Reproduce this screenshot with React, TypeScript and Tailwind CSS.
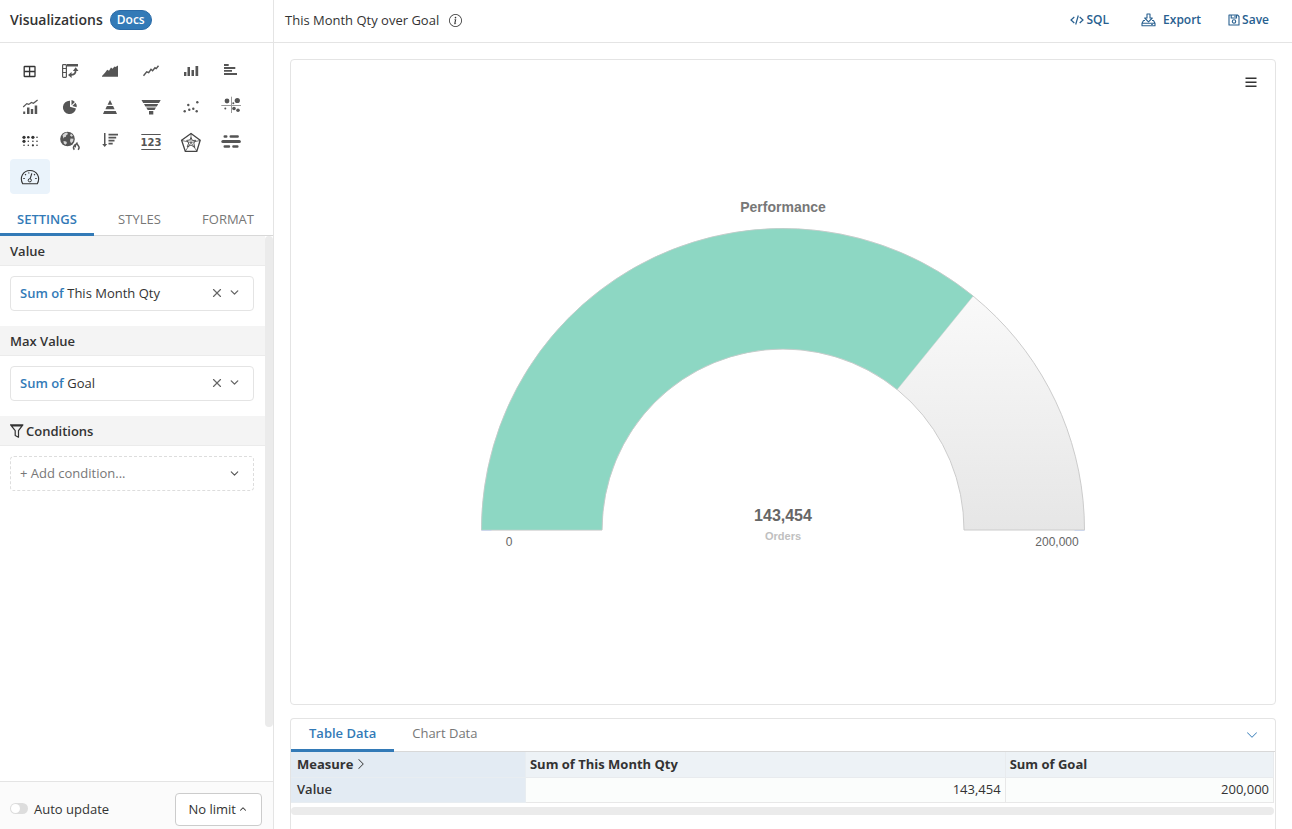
import { useState, type ReactNode } from 'react';
import { BsChevronDown, BsChevronRight, BsInfoCircle } from 'react-icons/bs';
import { ChevronDown, ChevronUp, X } from 'lucide-react';

/* Chart type glyphs, all drawn on a 40x35 grid cell */
const chartTypes: { name: string; glyph: ReactNode }[] = [
  {
    name: 'Table',
    glyph: (
      <g fill="none" stroke="#333" strokeWidth="1.3">
        <rect x="14.2" y="12.5" width="10.8" height="10" rx="0.6" />
        <path d="M19.6 12.5v10M14.2 17.5H25" />
      </g>
    ),
  },
  {
    name: 'Pivot table',
    glyph: (
      <>
        <path d="M17 10h11v2.500H17z" />
        <g fill="none" stroke="#555" strokeWidth="1.2">
          <rect x="12.600" y="10.600" width="3.800" height="12.800" rx="0.800" />
          <path d="M12.600 14.500h3.800M12.600 18.500h3.800" />
          <path d="M20.500 21c3.200 0 5.200-1.400 5.200-4.700" strokeWidth="1.700" />
        </g>
        <path d="M25.700 13.300l2.800 3.700h-5.600zM18 21l3.600-2.900v5.800z" />
      </>
    ),
  },
  {
    name: 'Area chart',
    glyph: <path d="M12 22.7v-.8l3-3.200 2.200-3 1.800 1 2-3.200 1.500 1.200 2-2.200 1 .6 2.500-1.700v11.300z" />,
  },
  {
    name: 'Line chart',
    glyph: (
      <path
        d="M13.500 21.800l3.200-4 2 .9 2.300-3.400 1.600 1.500 2.400-3 1.200.8 2.300-2.900"
        fill="none"
        stroke="#555"
        strokeWidth="1.4"
      />
    ),
  },
  {
    name: 'Column chart',
    glyph: <path d="M14 18h2.400v4H14zM17.500 13h2.500v9h-2.500zM21.500 16H24v6h-2.500zM25.500 12h2.700v10h-2.700z" />,
  },
  {
    name: 'Bar chart',
    glyph: <path d="M14 10h4.700v2H14zM14 13h11.300v1.900H14zM14 16h8v1.800h-8zM14 19h13v2H14z" />,
  },
  {
    name: 'Combo chart',
    glyph: (
      <>
        <path
          d="M13.200 18l3.600-3.400 2 .8 2.600-2 2 .8 4.200-3.200"
          fill="none"
          stroke="#555"
          strokeWidth="1.2"
        />
        <path d="M13.200 22.500h2V25h-2zM17 18.500h2.500V25H17zM20.800 20h2.400v5h-2.400zM24.700 16.500h2.500V25h-2.500z" />
      </>
    ),
  },
  {
    name: 'Pie chart',
    glyph: (
      <>
        <path d="M20 11.800v6l6 1.700a6.600 6.600 0 1 1-6-7.700z" />
        <path d="M21.500 11a6 6 0 0 1 3.400 2l-3.400 3.300zM25.500 13.800a5.500 5.500 0 0 1 1.200 4.400l-4.300-1.300z" />
      </>
    ),
  },
  {
    name: 'Pyramid chart',
    glyph: <path d="M20 11l2.400 4.700h-4.800zM16.900 17h6.200l1.500 3.200h-9.200zM14.300 22h11.400l1.300 3H13z" />,
  },
  {
    name: 'Funnel chart',
    glyph: <path d="M11.500 11h19.200l-1.700 3H13.200zM14 15h14.200l-1.400 2.500H15.400zM16.200 18.500h9.800L24.500 21h-6.800zM19 22h4.300v3.600H19z" />,
  },
  {
    name: 'Scatter chart',
    glyph: (
      <>
        <circle cx="14.7" cy="22.3" r="1.2" />
        <circle cx="18.3" cy="16" r="1.2" />
        <circle cx="19.3" cy="20.7" r="1.2" />
        <circle cx="23.3" cy="19.7" r="1.2" />
        <circle cx="26.7" cy="22.3" r="1.2" />
        <circle cx="27.3" cy="13.3" r="1.2" />
      </>
    ),
  },
  {
    name: 'Quadrant chart',
    glyph: (
      <>
        <path d="M11.300 16.500H31M21.500 7.700V24" stroke="#999" strokeWidth="1" />
        <circle cx="17" cy="12" r="2.400" />
        <circle cx="27.300" cy="11.500" r="2.600" />
        <circle cx="15.300" cy="19.500" r="1" />
        <circle cx="24" cy="19.500" r="1.800" />
        <circle cx="28" cy="21.300" r="1.800" />
        <circle cx="23.300" cy="14.300" r="1" />
      </>
    ),
  },
  {
    name: 'Heatmap',
    glyph: (
      <g fill="#333">
        <circle cx="14" cy="13.300" r="1.600" />
        <circle cx="18.300" cy="13.300" r="1.300" />
        <circle cx="22.900" cy="13.300" r="1.600" />
        <circle cx="27" cy="13.300" r="0.800" />
        <circle cx="14" cy="17.300" r="1.600" />
        <circle cx="18.300" cy="17.300" r="0.800" />
        <circle cx="22.900" cy="17.300" r="0.800" />
        <circle cx="27" cy="17.300" r="0.800" />
        <circle cx="14" cy="21.300" r="0.800" />
        <circle cx="18.300" cy="21.300" r="0.800" />
        <circle cx="22.900" cy="21.300" r="1.100" />
        <circle cx="27" cy="21.300" r="0.800" />
      </g>
    ),
  },
  {
    name: 'Map',
    glyph: (
      <>
        <circle cx="17.500" cy="15" r="7.300" />
        <path
          d="M12.500 11l2.500-2 2-.5 1 1.500-1.700 1.200-.6 1.800-1.700.3-.5 1.400zM21 9.500l2 2.300-1.300 1-1.700-1.300zM20.500 14.500l3 .3-.4 2.400-2 2-1.100-2.200zM13.500 17l2.700.5.800 1.500-1.500 1.800-1.700-1.300z"
          fill="#d5d5d5"
        />
        <path
          d="M24.300 25.700c-1.300-1.600-.9-3.200.3-4.500l.7.900c.1-1.300.7-2.200 1.500-2.900.3 1.700 2.300 2.500 2.300 4.300 0 .9-.4 1.600-1 2.200"
          fill="none"
          stroke="#555"
          strokeWidth="1.500"
        />
      </>
    ),
  },
  {
    name: 'Sorted list',
    glyph: (
      <>
        <path d="M14 9h1.500v11h1.700l-2.500 3-2.500-3H14z" />
        <path d="M18.500 9.800H28v1.800h-9.500zM18.500 12.800h7.700v1.700h-7.700zM18.500 15.800h6v1.700h-6zM18.500 18.800h4.200v1.600h-4.200z" />
      </>
    ),
  },
  {
    name: 'Number',
    glyph: (
      <>
        <path d="M11.300 10h19.400v1.100H11.300zM11.300 25h19.400v1.100H11.300z" />
        <text x="21" y="22" textAnchor="middle" className="font-['DejaVu_Sans',sans-serif] text-[10px] font-bold">
          123
        </text>
      </>
    ),
  },
  {
    name: 'Radar chart',
    glyph: (
      <g fill="none" stroke="#444">
        <path d="M21 9.500l9.200 6.800-3.400 11H15.300l-3.700-11z" strokeWidth="1.300" />
        <path d="M21 9.500v9l9-2M21 18.500l5.800 8.500M21 18.500l-5.500 8.500M21 18.500l-9.200-2" strokeWidth="0.700" />
        <path d="M21 13.500l1.500 3 3.300-.2-2 2.700 1 4.500-3.800-2.500-3.800 2 1.500-4-2-2.600 3.200-.4z" strokeWidth="0.900" />
      </g>
    ),
  },
  {
    name: 'Timeline',
    glyph: (
      <g stroke="#555" strokeLinecap="round">
        <path d="M14.700 12.500h1.600M20.700 12.500h7M14.700 22.500h4.300M23.400 22.500h4" strokeWidth="2.400" />
        <path d="M12.800 17.500h16.600" strokeWidth="3" />
      </g>
    ),
  },
  {
    name: 'Gauge',
    glyph: (
      <g fill="none" stroke="#333">
        <path d="M12.700 24.700c-3.500-6.200.4-13.200 7.300-13.200s10.800 7 7.300 13.200z" strokeWidth="1.100" strokeLinejoin="round" />
        <circle cx="19.800" cy="21.300" r="1.600" />
        <path d="M20.200 19.700l1.600-5.400M13.300 19.500h1.500M25.200 19.500h1.500M15 15.200l1 1M25 15.200l-1 1M18.700 13.300l.2 1.200" strokeWidth="1.100" />
      </g>
    ),
  },
];

const settingTabs = ['SETTINGS', 'STYLES', 'FORMAT'];
const dataTabs = ['Table Data', 'Chart Data'];

export default function App() {
  return (
    <div className="flex h-screen bg-white font-['Open_Sans','Noto_Sans',sans-serif] text-[13px] leading-5 text-[#333]">
      <Sidebar />
      <main className="flex min-w-0 flex-1 flex-col">
        <TopBar />
        <div className="flex min-h-0 flex-1 flex-col gap-[13px] px-4 pt-4">
          <GaugeCard value={143454} max={200000} />
          <DataPanel />
        </div>
      </main>
    </div>
  );
}

function Sidebar() {
  const [selected, setSelected] = useState('Gauge');
  const [tab, setTab] = useState('SETTINGS');

  return (
    <aside className="flex w-[274px] shrink-0 flex-col border-r border-[#e4e4e4]">
      <header className="flex h-[43px] shrink-0 items-center gap-[7px] border-b border-[#e4e4e4] px-2.5 pb-0.5">
        <h1 className="text-sm font-semibold">Visualizations</h1>
        <a href="#docs" className="rounded-full border border-[#2a6ba8] bg-[#337ab7] px-1.5 text-xs leading-[18px] font-semibold text-white">
          Docs
        </a>
      </header>

      <div className="grid grid-cols-[repeat(6,40px)] px-2.5 pt-[11px] pb-2">
        {chartTypes.map(({ name, glyph }) => (
          <button
            key={name}
            aria-label={name}
            onClick={() => setSelected(name)}
            className={`h-[35px] rounded ${selected === name ? 'bg-[#eaf3fb]' : ''}`}
          >
            <svg viewBox="0 0 40 35" className="block h-[35px] w-10" fill="#555">
              {glyph}
            </svg>
          </button>
        ))}
      </div>

      <div role="tablist" className="flex h-[34px] shrink-0 justify-between border-b border-[#d8d8d8] pr-0.5">
        {settingTabs.map((t) => (
          <button
            key={t}
            role="tab"
            aria-selected={t === tab}
            onClick={() => setTab(t)}
            className={`-mb-px border-b-3 px-[17px] pt-[3px] ${
              t === tab ? 'border-[#337ab7] font-semibold text-[#337ab7]' : 'border-transparent text-[#777]'
            }`}
          >
            {t}
          </button>
        ))}
      </div>

      <div className="flex min-h-0 flex-1">
        <div className="flex-1">
          <SettingSection title="Value">
            <FieldPicker field="This Month Qty" />
          </SettingSection>
          <SettingSection title="Max Value">
            <FieldPicker field="Goal" />
          </SettingSection>
          <SettingSection title="Conditions" icon={<FilterIcon />}>
            <button className="flex h-[35px] w-full items-center justify-between rounded border border-dashed border-[#ddd] pr-3 pb-px pl-[9px] text-[#777]">
              + Add condition...
              <ChevronDown size={13} className="text-[#555]" />
            </button>
          </SettingSection>
        </div>
        <div className="h-[90%] w-2 rounded bg-[#ebebeb]" />
      </div>

      <footer className="flex shrink-0 items-center justify-between border-t border-[#e4e4e4] bg-[#fbfbfb] pt-[11px] pr-[11px] pb-[3px] pl-2.5">
        <label className="flex items-center gap-1.5 pb-0.5">
          <input type="checkbox" className="peer sr-only" />
          <span className="flex h-[11px] w-[18px] rounded-full bg-[#ddd] p-px peer-checked:justify-end">
            <span className="size-[9px] rounded-full bg-white" />
          </span>
          Auto update
        </label>
        <button className="flex h-[33px] items-center gap-0.5 rounded border border-[#ccc] bg-white px-[13px] pb-px">
          No limit
          <ChevronUp size={10} strokeWidth={2.5} />
        </button>
      </footer>
    </aside>
  );
}

function SettingSection({ title, icon, children }: { title: string; icon?: ReactNode; children: ReactNode }) {
  return (
    <section>
      <h2 className="flex h-[30px] items-center gap-0.5 border-b border-[#ebebeb] bg-[#f4f4f4] px-2.5 font-semibold">
        {icon}
        {title}
      </h2>
      <div className="pt-2.5 pr-[11px] pb-[15px] pl-2.5">{children}</div>
    </section>
  );
}

function FieldPicker({ field }: { field: string }) {
  return (
    <div className="flex h-[35px] items-center rounded border border-[#e4e4e4] pr-3 pb-0.5 pl-[9px] text-[#666]">
      <button className="flex-1 text-left text-[#333]">
        <span className="font-semibold text-[#337ab7]">Sum of</span> {field}
      </button>
      <button aria-label={`Clear ${field}`} className="mr-1">
        <X size={14} strokeWidth={2} />
      </button>
      <button aria-label={`Change ${field}`}>
        <ChevronDown size={13} strokeWidth={2.5} />
      </button>
    </div>
  );
}

function FilterIcon() {
  return (
    <svg viewBox="0 0 14 14" className="size-3.5" fill="none" stroke="#333" strokeWidth="1.2" strokeLinejoin="round">
      <path d="M.6.8h12.300L8.500 6.600v6.600L5.200 11.500V6.600L.6.800zM1.300 2h11" />
    </svg>
  );
}

function TopBar() {
  return (
    <header className="flex h-[43px] shrink-0 items-center border-b border-[#e4e4e4] pr-[23px] pb-0.5 pl-[11px]">
      <h2>This Month Qty over Goal</h2>
      <button aria-label="About this query" className="ml-2.5">
        <BsInfoCircle size={13} />
      </button>
      <nav className="ml-auto flex items-center font-semibold text-[#286090]">
        <button className="flex items-center gap-[3px] text-xs">
          <svg viewBox="0 0 14 12" className="h-3 w-3.5" fill="none" stroke="currentColor" strokeWidth="1.2">
            <path d="M4.300 3L1 6l3.300 3M9.700 3L13 6 9.700 9M8.300 1.500l-2.600 9" />
          </svg>
          SQL
        </button>
        <button className="ml-8 flex items-center gap-[7px] text-xs">
          <svg viewBox="0 0 15 14" className="h-3.5 w-[15px]" fill="none" stroke="currentColor" strokeWidth="1.1" strokeLinejoin="round">
            <path d="M6 1h3v4h2.300L7.500 8.800 3.700 5H6z" />
            <path d="M4 7.500H2.500L1 10.200V12.700h13v-2.500l-1.500-2.700H11M1 10.200h13" />
            <path d="M10 11.500h2" strokeWidth="0.800" />
          </svg>
          Export
        </button>
        <button className="ml-[27px] flex items-center gap-0.5 text-xs">
          <svg viewBox="0 0 12 12" className="size-3" fill="none" stroke="currentColor" strokeWidth="1.1">
            <path d="M1 1h8.500L11 2.500V11H1z" strokeLinejoin="round" />
            <path d="M3.200 1v3h5.300V1M7 1.500V3" />
            <circle cx="6" cy="7.500" r="1.700" />
          </svg>
          Save
        </button>
      </nav>
    </header>
  );
}

const CX = 492;
const CY = 470;
const OUTER = 301.5;
const INNER = 181;

// point on a circle, t runs 0..1 from the left end to the right end
function at(r: number, t: number) {
  const a = Math.PI * (1 - t);
  return `${(CX + r * Math.cos(a)).toFixed(2)} ${(CY - r * Math.sin(a)).toFixed(2)}`;
}

function arc(from: number, to: number) {
  return `M${at(OUTER, from)}A${OUTER} ${OUTER} 0 0 1 ${at(OUTER, to)}L${at(INNER, to)}A${INNER} ${INNER} 0 0 0 ${at(INNER, from)}Z`;
}

function GaugeCard({ value, max }: { value: number; max: number }) {
  return (
    <section className="relative min-h-0 flex-1 rounded border border-[#e4e4e4]">
      <svg viewBox="0 0 984 644" className="block h-full w-full font-['Liberation_Sans',Arial,sans-serif]" textAnchor="middle">
        <defs>
          <linearGradient id="track" x1="0" y1="0" x2="0" y2="1">
            <stop offset="0" stopColor="#fff" />
            <stop offset="1" stopColor="#e6e6e6" />
          </linearGradient>
        </defs>
        <path d={arc(0, 1)} fill="url(#track)" stroke="#ccc" />
        <path d={arc(0, value / max)} fill="#8dd7c3" stroke="#ccc" strokeWidth="0.5" />
        <path d={`M${CX - OUTER} ${CY + 0.5}h10M${CX + OUTER - 10} ${CY + 0.5}h10`} stroke="#ccd6eb" />
        <text x={CX} y="152" className="text-[14px] font-bold" fill="#777">Performance</text>
        <text x={CX} y="461" className="text-[16px] font-bold" fill="#666">{value.toLocaleString('en-US')}</text>
        <text x={CX} y="480" className="text-[11px] font-bold" fill="#c0c0c0">Orders</text>
        <text x="218" y="486" className="text-[12px]" fill="#666">0</text>
        <text x="766" y="486" className="text-[12px]" fill="#666">{max.toLocaleString('en-US')}</text>
      </svg>
      <button aria-label="Chart menu" className="absolute top-4 right-[18px]">
        <svg viewBox="0 0 12 12" className="size-3" stroke="#333" strokeWidth="1.5">
          <path d="M.5 2.300h11M.5 6.300h11M.5 10.300h11" />
        </svg>
      </button>
    </section>
  );
}

function DataPanel() {
  const [tab, setTab] = useState('Table Data');

  return (
    <section className="h-[111px] shrink-0 rounded-t border border-b-0 border-[#e4e4e4]">
      <div className="flex h-[33px] items-stretch border-b border-[#d8d8d8]">
        <div role="tablist" className="flex">
          {dataTabs.map((t) => (
            <button
              key={t}
              role="tab"
              aria-selected={t === tab}
              onClick={() => setTab(t)}
              className={`-mb-px border-b-3 px-[18px] pb-[3px] ${
                t === tab ? 'border-[#337ab7] font-semibold text-[#337ab7]' : 'border-transparent text-[#777]'
              }`}
            >
              {t}
            </button>
          ))}
        </div>
        <button aria-label="Collapse panel" className="mr-[17px] ml-auto text-[#337ab7]">
          <BsChevronDown size={12} />
        </button>
      </div>
      <table className="w-full table-fixed border-separate border-spacing-0 pr-px text-left">
        <colgroup>
          <col className="w-[23.9%]" />
          <col className="w-[48.8%]" />
          <col />
        </colgroup>
        <thead>
          <tr className="bg-[#edf2f6]">
            <th className="h-[26px] border-r border-b border-[#e8edf1] bg-[#e3ebf3] px-1.5 pt-0 pb-0.5 font-bold">
              <span className="flex items-center gap-0.5">
                Measure
                <BsChevronRight size={12} />
              </span>
            </th>
            <th className="border-r border-b border-[#e8ebee] px-1 pt-0 pb-0.5 font-bold">Sum of This Month Qty</th>
            <th className="border-r border-b border-[#e8ebee] px-1 pt-0 pb-0.5 font-bold">Sum of Goal</th>
          </tr>
        </thead>
        <tbody>
          <tr className="bg-[#fbfdfc]">
            <th className="h-[25px] border-r border-b border-[#e8edf1] bg-[#e3ebf3] px-1.5 pt-0 pb-0.5 font-semibold">Value</th>
            <td className="border-r border-b border-[#e8e8e8] px-1 pt-0 pb-0.5 text-right">143,454</td>
            <td className="border-r border-b border-[#e8e8e8] px-1 pt-0 pb-0.5 text-right">200,000</td>
          </tr>
        </tbody>
      </table>
      <div className="mt-1 mr-px h-2 rounded bg-[#ebebeb]" />
    </section>
  );
}
